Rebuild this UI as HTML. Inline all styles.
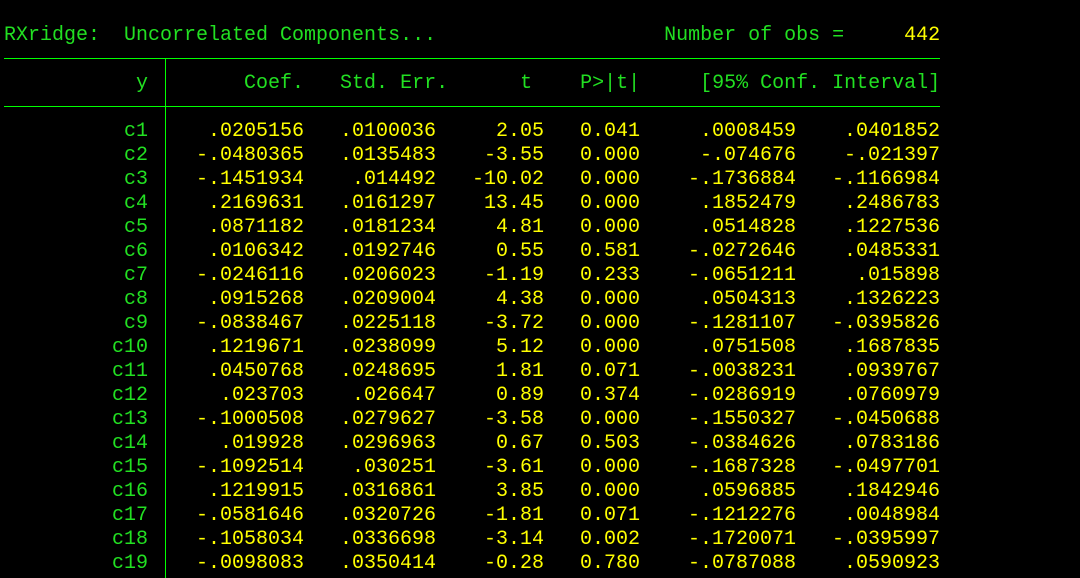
<!DOCTYPE html>
<html><head><meta charset="utf-8"><style>
body{margin:0;background:#000;width:1080px;height:578px;overflow:hidden;position:relative;font-family:"Liberation Mono",monospace;font-size:20px;}
.r{position:absolute;left:4px;height:24px;line-height:24px;white-space:pre;display:flex;margin-top:2px}
.b{position:absolute;left:4px;height:24px;line-height:24px;white-space:pre;margin-top:2px}
.r span{display:inline-block;text-align:right;}
.g{color:#22e022}.y{color:#ffff00}
.h{position:absolute;left:4px;width:936px;height:1px;background:#00ff00}
.v{position:absolute;left:165px;width:1px;background:#00ff00;top:58px;height:520px}
</style></head><body>
<div class="b g" style="top:22px">RXridge:  Uncorrelated Components...                   Number of obs =     <span class="y">442</span></div>
<div class="h" style="top:58px"></div>
<div class="h" style="top:106px"></div>
<div class="v"></div>
<div class="b g" style="top:70px">           y        Coef.   Std. Err.      t    P&gt;|t|     [95% Conf. Interval]</div>
<div class="r" style="top:118px"><span class="g" style="width:144px">c1</span><span class="y" style="width:156px">.0205156</span><span class="y" style="width:132px">.0100036</span><span class="y" style="width:108px">2.05</span><span class="y" style="width:96px">0.041</span><span class="y" style="width:156px">.0008459</span><span class="y" style="width:144px">.0401852</span></div>
<div class="r" style="top:142px"><span class="g" style="width:144px">c2</span><span class="y" style="width:156px">-.0480365</span><span class="y" style="width:132px">.0135483</span><span class="y" style="width:108px">-3.55</span><span class="y" style="width:96px">0.000</span><span class="y" style="width:156px">-.074676</span><span class="y" style="width:144px">-.021397</span></div>
<div class="r" style="top:166px"><span class="g" style="width:144px">c3</span><span class="y" style="width:156px">-.1451934</span><span class="y" style="width:132px">.014492</span><span class="y" style="width:108px">-10.02</span><span class="y" style="width:96px">0.000</span><span class="y" style="width:156px">-.1736884</span><span class="y" style="width:144px">-.1166984</span></div>
<div class="r" style="top:190px"><span class="g" style="width:144px">c4</span><span class="y" style="width:156px">.2169631</span><span class="y" style="width:132px">.0161297</span><span class="y" style="width:108px">13.45</span><span class="y" style="width:96px">0.000</span><span class="y" style="width:156px">.1852479</span><span class="y" style="width:144px">.2486783</span></div>
<div class="r" style="top:214px"><span class="g" style="width:144px">c5</span><span class="y" style="width:156px">.0871182</span><span class="y" style="width:132px">.0181234</span><span class="y" style="width:108px">4.81</span><span class="y" style="width:96px">0.000</span><span class="y" style="width:156px">.0514828</span><span class="y" style="width:144px">.1227536</span></div>
<div class="r" style="top:238px"><span class="g" style="width:144px">c6</span><span class="y" style="width:156px">.0106342</span><span class="y" style="width:132px">.0192746</span><span class="y" style="width:108px">0.55</span><span class="y" style="width:96px">0.581</span><span class="y" style="width:156px">-.0272646</span><span class="y" style="width:144px">.0485331</span></div>
<div class="r" style="top:262px"><span class="g" style="width:144px">c7</span><span class="y" style="width:156px">-.0246116</span><span class="y" style="width:132px">.0206023</span><span class="y" style="width:108px">-1.19</span><span class="y" style="width:96px">0.233</span><span class="y" style="width:156px">-.0651211</span><span class="y" style="width:144px">.015898</span></div>
<div class="r" style="top:286px"><span class="g" style="width:144px">c8</span><span class="y" style="width:156px">.0915268</span><span class="y" style="width:132px">.0209004</span><span class="y" style="width:108px">4.38</span><span class="y" style="width:96px">0.000</span><span class="y" style="width:156px">.0504313</span><span class="y" style="width:144px">.1326223</span></div>
<div class="r" style="top:310px"><span class="g" style="width:144px">c9</span><span class="y" style="width:156px">-.0838467</span><span class="y" style="width:132px">.0225118</span><span class="y" style="width:108px">-3.72</span><span class="y" style="width:96px">0.000</span><span class="y" style="width:156px">-.1281107</span><span class="y" style="width:144px">-.0395826</span></div>
<div class="r" style="top:334px"><span class="g" style="width:144px">c10</span><span class="y" style="width:156px">.1219671</span><span class="y" style="width:132px">.0238099</span><span class="y" style="width:108px">5.12</span><span class="y" style="width:96px">0.000</span><span class="y" style="width:156px">.0751508</span><span class="y" style="width:144px">.1687835</span></div>
<div class="r" style="top:358px"><span class="g" style="width:144px">c11</span><span class="y" style="width:156px">.0450768</span><span class="y" style="width:132px">.0248695</span><span class="y" style="width:108px">1.81</span><span class="y" style="width:96px">0.071</span><span class="y" style="width:156px">-.0038231</span><span class="y" style="width:144px">.0939767</span></div>
<div class="r" style="top:382px"><span class="g" style="width:144px">c12</span><span class="y" style="width:156px">.023703</span><span class="y" style="width:132px">.026647</span><span class="y" style="width:108px">0.89</span><span class="y" style="width:96px">0.374</span><span class="y" style="width:156px">-.0286919</span><span class="y" style="width:144px">.0760979</span></div>
<div class="r" style="top:406px"><span class="g" style="width:144px">c13</span><span class="y" style="width:156px">-.1000508</span><span class="y" style="width:132px">.0279627</span><span class="y" style="width:108px">-3.58</span><span class="y" style="width:96px">0.000</span><span class="y" style="width:156px">-.1550327</span><span class="y" style="width:144px">-.0450688</span></div>
<div class="r" style="top:430px"><span class="g" style="width:144px">c14</span><span class="y" style="width:156px">.019928</span><span class="y" style="width:132px">.0296963</span><span class="y" style="width:108px">0.67</span><span class="y" style="width:96px">0.503</span><span class="y" style="width:156px">-.0384626</span><span class="y" style="width:144px">.0783186</span></div>
<div class="r" style="top:454px"><span class="g" style="width:144px">c15</span><span class="y" style="width:156px">-.1092514</span><span class="y" style="width:132px">.030251</span><span class="y" style="width:108px">-3.61</span><span class="y" style="width:96px">0.000</span><span class="y" style="width:156px">-.1687328</span><span class="y" style="width:144px">-.0497701</span></div>
<div class="r" style="top:478px"><span class="g" style="width:144px">c16</span><span class="y" style="width:156px">.1219915</span><span class="y" style="width:132px">.0316861</span><span class="y" style="width:108px">3.85</span><span class="y" style="width:96px">0.000</span><span class="y" style="width:156px">.0596885</span><span class="y" style="width:144px">.1842946</span></div>
<div class="r" style="top:502px"><span class="g" style="width:144px">c17</span><span class="y" style="width:156px">-.0581646</span><span class="y" style="width:132px">.0320726</span><span class="y" style="width:108px">-1.81</span><span class="y" style="width:96px">0.071</span><span class="y" style="width:156px">-.1212276</span><span class="y" style="width:144px">.0048984</span></div>
<div class="r" style="top:526px"><span class="g" style="width:144px">c18</span><span class="y" style="width:156px">-.1058034</span><span class="y" style="width:132px">.0336698</span><span class="y" style="width:108px">-3.14</span><span class="y" style="width:96px">0.002</span><span class="y" style="width:156px">-.1720071</span><span class="y" style="width:144px">-.0395997</span></div>
<div class="r" style="top:550px"><span class="g" style="width:144px">c19</span><span class="y" style="width:156px">-.0098083</span><span class="y" style="width:132px">.0350414</span><span class="y" style="width:108px">-0.28</span><span class="y" style="width:96px">0.780</span><span class="y" style="width:156px">-.0787088</span><span class="y" style="width:144px">.0590923</span></div>
</body></html>
